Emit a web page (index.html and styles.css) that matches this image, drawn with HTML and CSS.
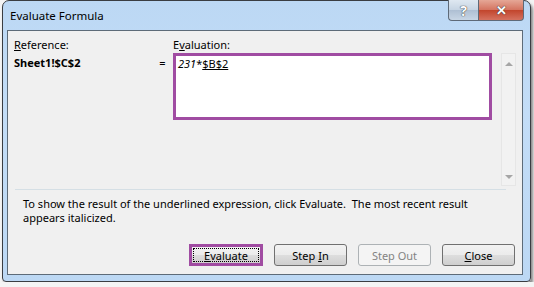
FILE: index.html
```html
<!DOCTYPE html>
<html lang="en">
<head>
    <meta charset="UTF-8">
    <title>Evaluate Formula</title>
    <link rel="stylesheet" href="styles.css">
</head>
<body>
    <div class="window">
        <div class="titlebar">
            <div class="title">Evaluate Formula</div>
            <div class="caption-buttons">
                <div class="cap-btn help">?</div>
                <div class="cap-btn close">&#10005;</div>
            </div>
        </div>
        <div class="client">
            <div class="top-area">
                <div class="label ref-label"><u>R</u>eference:</div>
                <div class="label eval-label">E<u>v</u>aluation:</div>
                <div class="ref-value">Sheet1!$C$2</div>
                <div class="equals">=</div>
                <div class="eval-box">
                    <i>231</i>*<u>$B$2</u>
                </div>
                <div class="scrollbar">
                    <span class="arrow up"></span>
                    <span class="arrow down"></span>
                </div>
            </div>
            <div class="separator"></div>
            <p class="hint">To show the result of the underlined expression, click Evaluate.&nbsp; The most recent result appears italicized.</p>
            <div class="buttons">
                <button class="btn highlighted"><span class="focus"><u>E</u>valuate</span></button>
                <button class="btn">Step <u>I</u>n</button>
                <button class="btn disabled">Step Out</button>
                <button class="btn"><u>C</u>lose</button>
            </div>
        </div>
    </div>
</body>
</html>
```

FILE: styles.css
```css
body {
    margin: 0;
    background-color: #f4f4f4;
    font-family: "Noto Sans", Arial, sans-serif;
    font-size: 11px;
    color: #000;
}
.window {
    margin-left: 2px;
    width: 527px;
    height: 280px;
    border: 1px solid #3a3d42;
    border-radius: 7px 7px 4px 4px;
    background: linear-gradient(to bottom, #bcd8f4, #c3ddf7 40%, #bcd8f4);
    box-shadow: 2px 3px 3px rgba(0, 0, 0, 0.45);
    display: flex;
    flex-direction: column;
}
.titlebar {
    height: 29px;
    flex-shrink: 0;
    display: flex;
    justify-content: space-between;
}
.title {
    padding: 7px 0 0 7px;
    font-size: 11.5px;
}
.caption-buttons {
    display: flex;
    margin-right: 6px;
    margin-top: -1px;
}
.cap-btn {
    height: 21px;
    border: 1px solid #5e6a78;
    border-top: none;
    box-sizing: border-box;
    display: flex;
    justify-content: center;
    align-items: center;
    font-weight: bold;
}
.help {
    width: 30px;
    border-radius: 0 0 0 4px;
    border-right: none;
    background: linear-gradient(to bottom, #dfe8f1, #c6d4e3 50%, #aebfd3 51%, #c8d6e5);
    color: #fff;
    font-size: 14px;
    text-shadow: 0 0 1px #333, 0 0 1px #333;
}
.close {
    width: 46px;
    border-radius: 0 0 4px 0;
    background: linear-gradient(to bottom, #e5a796, #d4735f 50%, #c2452c 51%, #d57260);
    color: #fff;
    font-size: 13px;
    text-shadow: 0 0 1px #333, 0 0 1px #333;
}
.client {
    flex: 1;
    margin: 0 7px 6px 4px;
    border: 1px solid #5d6b78;
    background-color: #f0f0f0;
    display: flex;
    flex-direction: column;
}
.top-area {
    display: grid;
    grid-template-columns: 141px 15px 322px 24px;
    grid-template-rows: 16px 133px;
    padding: 6px 0 0 6px;
}
.label {
    line-height: 15px;
}
.ref-label {
    grid-column: 1 / 3;
    grid-row: 1;
}
.eval-label {
    grid-column: 3;
    grid-row: 1;
    margin-left: 3px;
}
.ref-value {
    grid-column: 1;
    grid-row: 2;
    font-weight: bold;
    padding-top: 2px;
}
.equals {
    grid-column: 2;
    grid-row: 2;
    padding-top: 2px;
    text-align: center;
}
.eval-box {
    grid-column: 3;
    grid-row: 2;
    margin-left: 3px;
    width: 311px;
    height: 61px;
    border: 3px solid #a04ca2;
    background-color: #fff;
    padding: 0 0 0 2px;
    align-self: start;
}
.scrollbar {
    grid-column: 4;
    grid-row: 2;
    margin-left: 9px;
    width: 15px;
    border: 1px solid #e6e6e6;
    box-sizing: border-box;
    background-color: #f2f2f2;
    display: flex;
    flex-direction: column;
    justify-content: space-between;
    align-items: center;
    padding: 8px 0 6px;
}
.arrow {
    width: 0;
    height: 0;
    border-left: 4px solid transparent;
    border-right: 4px solid transparent;
}
.arrow.up {
    border-bottom: 4px solid #a6a6a6;
}
.arrow.down {
    border-top: 4px solid #a6a6a6;
}
.separator {
    margin: 3px 16px 0 7px;
    height: 1px;
    background-color: #d5dfe5;
}
.hint {
    margin: 7px 30px 0 15px;
    line-height: 14px;
}
.buttons {
    display: flex;
    justify-content: flex-end;
    gap: 11px;
    margin-top: 19px;
    padding-right: 7px;
}
.btn {
    width: 73px;
    height: 22px;
    border: 1px solid #707070;
    border-radius: 3px;
    background: linear-gradient(to bottom, #f2f2f2, #ebebeb 50%, #dddddd 51%, #cfcfcf);
    font-family: "Noto Sans", Arial, sans-serif;
    font-size: 11px;
    color: #000;
    padding: 0;
}
.btn.highlighted {
    width: 74px;
    border: 3px solid #a04ca2;
    border-radius: 0;
    padding: 1px;
}
.btn .focus {
    display: block;
    height: 100%;
    box-sizing: border-box;
    border: 1px dotted #000;
    line-height: 13px;
}
.btn.disabled {
    border-color: #adb2b5;
    background: #f4f4f4;
    color: #838383;
}
```
